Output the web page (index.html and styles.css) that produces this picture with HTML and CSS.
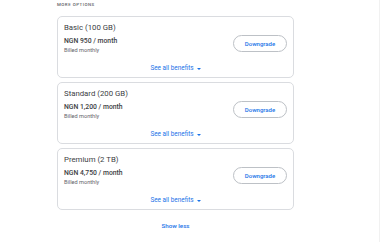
FILE: index.html
```html
<!DOCTYPE html>
<html lang="en">
  <head>
    <meta charset="UTF-8" />
    <title>More options</title>
    <link rel="stylesheet" href="styles.css">
  </head>
  <body>
    <div class="options">
      <div class="options-label">More options</div>

      <div class="plan">
        <div class="plan-top">
          <div class="plan-info">
            <div class="plan-name">Basic (100 GB)</div>
            <div class="plan-price">NGN 950 / month</div>
            <div class="plan-billing">Billed monthly</div>
          </div>
          <button class="plan-btn">Downgrade</button>
        </div>
        <div class="plan-benefits">
          See all benefits
          <svg class="caret" viewBox="0 0 10 5"><path d="M0 0h10L5 5z" /></svg>
        </div>
      </div>

      <div class="plan">
        <div class="plan-top">
          <div class="plan-info">
            <div class="plan-name">Standard (200 GB)</div>
            <div class="plan-price">NGN 1,200 / month</div>
            <div class="plan-billing">Billed monthly</div>
          </div>
          <button class="plan-btn">Downgrade</button>
        </div>
        <div class="plan-benefits">
          See all benefits
          <svg class="caret" viewBox="0 0 10 5"><path d="M0 0h10L5 5z" /></svg>
        </div>
      </div>

      <div class="plan">
        <div class="plan-top">
          <div class="plan-info">
            <div class="plan-name">Premium (2 TB)</div>
            <div class="plan-price">NGN 4,750 / month</div>
            <div class="plan-billing">Billed monthly</div>
          </div>
          <button class="plan-btn">Downgrade</button>
        </div>
        <div class="plan-benefits">
          See all benefits
          <svg class="caret" viewBox="0 0 10 5"><path d="M0 0h10L5 5z" /></svg>
        </div>
      </div>

      <div class="show-less">Show less</div>
    </div>
  </body>
</html>
```

FILE: styles.css
```css
* {
  margin: 0;
  padding: 0;
  box-sizing: border-box;
}

body {
  width: 380px;
  height: 242px;
  overflow: hidden;
  background: white;
  border-right: 1px solid #f1f1f1;
  font-family: Roboto, "Liberation Sans", sans-serif;
  color: #202124;
}

.options {
  width: 237px;
  margin-left: 57px;
  padding-top: 2px;
  display: flex;
  flex-direction: column;
  gap: 4px;
}

.options-label {
  font-size: 4.4px;
  line-height: 6px;
  font-weight: 500;
  letter-spacing: 0.5px;
  text-transform: uppercase;
  color: #5f6368;
  margin-bottom: 4px;
}

.plan {
  border: 1px solid #dadce0;
  border-radius: 5px;
  padding: 6px 6px 4px 6px;
  height: 62px;
  display: flex;
  flex-direction: column;
}

.plan-top {
  display: flex;
  justify-content: space-between;
  align-items: flex-start;
}

.plan-name {
  font-size: 7.8px;
  line-height: 10px;
  color: #3c4043;
  margin-bottom: 4px;
}

.plan-price {
  font-size: 6.8px;
  line-height: 9px;
  font-weight: 500;
  color: #3c4043;
  margin-bottom: 1px;
}

.plan-billing {
  font-size: 5.6px;
  line-height: 7px;
  color: #5f6368;
}

.plan-btn {
  margin-top: 12px;
  width: 54px;
  height: 17px;
  border: 1px solid #bdc1c6;
  border-radius: 9px;
  background: white;
  color: #1a73e8;
  font-family: inherit;
  font-size: 6px;
  font-weight: 500;
}

.plan-benefits {
  margin-top: auto;
  display: flex;
  justify-content: center;
  align-items: center;
  gap: 3px;
  font-size: 6.4px;
  line-height: 9px;
  color: #1a73e8;
}

.caret {
  width: 4px;
  height: 2px;
  fill: #1a73e8;
}

.show-less {
  margin-top: 8px;
  text-align: center;
  font-size: 6.2px;
  line-height: 8px;
  font-weight: 500;
  color: #1a73e8;
}
```
